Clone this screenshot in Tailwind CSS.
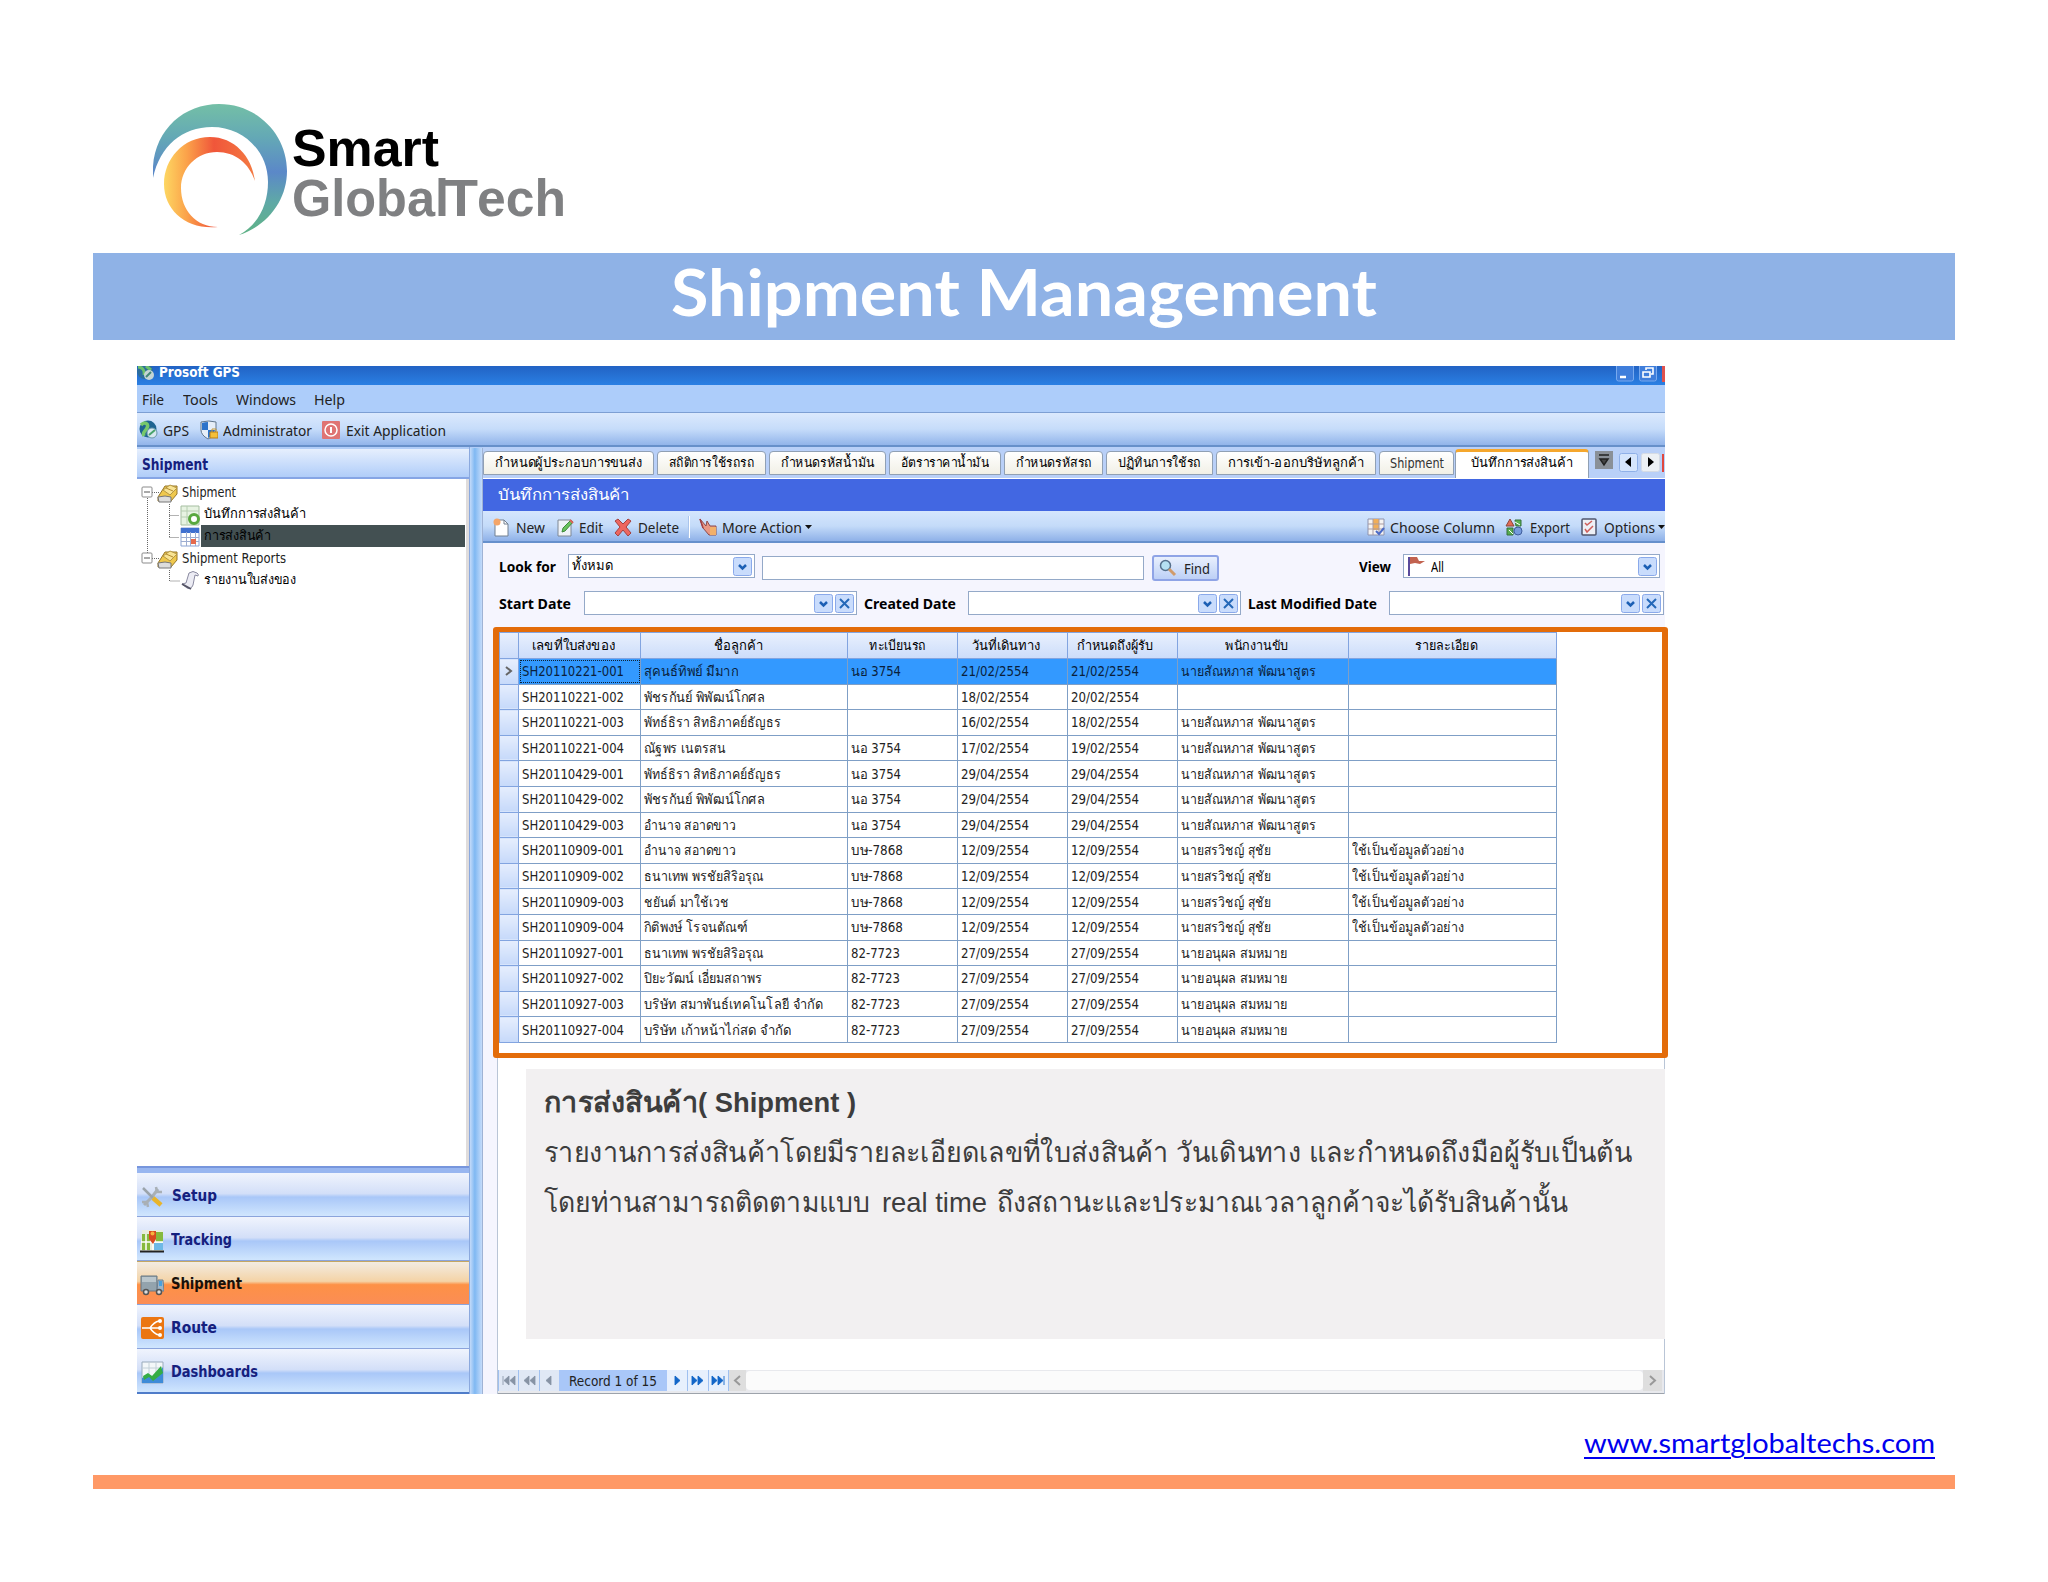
<!DOCTYPE html>
<html lang="th">
  <head>
    <meta charset="utf-8" />
    <title>Shipment Management</title>
    <script src="https://cdn.jsdelivr.net/npm/@tailwindcss/browser@4"></script>
  </head>
  <body class="w-[2048px] h-[1582px] overflow-hidden bg-white font-['DejaVu_Sans_Condensed','DejaVu_Sans',sans-serif] text-[#222]">
    <!-- Logo -->
    <header class="flex h-[253px] pl-[153px] pt-[104px]">
      <svg class="w-[135px] h-[132px] shrink-0" viewBox="0 0 135 132">
        <defs>
          <linearGradient id="ring" x1="0" y1="0" x2="0" y2="1">
            <stop offset="0" stop-color="#74bfa6" />
            <stop offset=".25" stop-color="#64a9b5" />
            <stop offset=".52" stop-color="#5b88c8" />
            <stop offset=".75" stop-color="#5fa9a6" />
            <stop offset="1" stop-color="#5fb386" />
          </linearGradient>
          <linearGradient id="flame" x1="0" y1="0" x2="1" y2="0">
            <stop offset="0" stop-color="#fdd762" />
            <stop offset=".25" stop-color="#fba24a" />
            <stop offset=".55" stop-color="#f0563a" />
            <stop offset="1" stop-color="#f47b43" />
          </linearGradient>
        </defs>
        <path d="M0 74C-3 30 28 0 66 0c39 0 68 31 68 67 0 28-18 54-48 64 20-11 29-31 29-53 0-31-25-55-56-55C29 23 7 42 0 74Z" fill="url(#ring)" />
        <path d="M102 77C99 52 81 33 57 33 30 33 11 55 11 80c0 26 22 46 54 43C43 123 28 106 28 84 28 64 44 48 64 48c18 0 32 11 38 29Z" fill="url(#flame)" />
      </svg>
      <div class="ml-[4px] pt-[19px] font-['Liberation_Sans'] text-[52px] leading-[50px] font-bold">
        <div class="text-black"><span data-w="147">Smart</span></div>
        <div class="flex text-[#7f8082]"><span data-w="157">Global</span><span class="-ml-[5px]" data-w="34">T</span><span class="-ml-px" data-w="89">ech</span></div>
      </div>
    </header>

    <div class="mx-[93px] w-[1862px] h-[87px] bg-[#8fb2e6] flex justify-center items-center text-white font-['Lato'] font-bold text-[65px] leading-none">
      <span class="-mt-[10px]" data-w="706">Shipment Management</span>
    </div>

    <!-- Application window -->
    <div class="mt-[26px] ml-[137px] w-[1528px] h-[1028px] flex flex-col bg-[#b1cdf8]">
      <div class="h-[19px] shrink-0 overflow-hidden flex bg-linear-to-b from-[#2263c4] to-[#2a7fe3] text-white">
        <svg class="w-[18px] h-[18px] shrink-0" viewBox="0 0 18 18"><circle cx="8" cy="5" r="8" fill="#2d6d9c" /><path d="M1 1c4 0 7 3 6 8M9 0l5 4" stroke="#6cc06c" stroke-width="3" fill="none" /><circle cx="12" cy="9" r="5" fill="#c5d5d5" /><path d="m9 11 5-5" stroke="#487" stroke-width="2" /></svg>
        <span class="ml-1 -mt-[5px] font-bold text-[14px] leading-[22px]" data-w="81">Prosoft GPS</span>
        <div class="ml-auto flex gap-[5px]">
          <svg class="w-[18px] h-[16px]" viewBox="0 0 18 16"><rect x=".5" y="-3" width="17" height="18" rx="2" fill="#3f7edb" stroke="#78a9ee" /><path d="M4 11h6" stroke="#fff" stroke-width="2.5" /></svg>
          <svg class="w-[18px] h-[16px]" viewBox="0 0 18 16"><rect x=".5" y="-3" width="17" height="18" rx="2" fill="#3f7edb" stroke="#78a9ee" /><path d="M7 4V2h7v6h-2M4 6h7v5H4z" stroke="#fff" stroke-width="1.6" fill="none" /></svg>
          <div class="w-[3px] h-[16px] bg-[#e0524e]"></div>
        </div>
      </div>

      <nav class="h-[28px] shrink-0 flex items-center pt-px pl-[5px] bg-[#adcdfa] font-['Noto_Sans'] text-[15px] border-b border-[#7d9fd3]">
        <span data-w="22">File</span><span class="ml-[19px]" data-w="35">Tools</span><span class="ml-[18px]" data-w="60">Windows</span><span class="ml-[18px]" data-w="31">Help</span>
      </nav>
      <div class="h-[34px] shrink-0 flex items-center pt-[2px] pl-[2px] bg-linear-to-b from-[#dbe9fd] via-[#c6dcfa] to-[#92b4ea] font-['Noto_Sans'] text-[15px] border-b-2 border-[#6790ca]">
        <svg class="w-[19px] h-[20px]" viewBox="0 0 19 20"><circle cx="9" cy="9" r="8.5" fill="#1f6491" /><path d="M2 5c4-4 8-1 6 3S3 12 5 16" stroke="#77c86b" stroke-width="3.5" fill="none" /><circle cx="13" cy="13" r="5" fill="#d7e8ef" stroke="#6998ab" /><path d="m10 15 6-5" stroke="#49a36b" stroke-width="2" /></svg>
        <span class="ml-[5px]" data-w="26">GPS</span>
        <svg class="ml-[11px] w-[18px] h-[20px]" viewBox="0 0 18 20"><path d="M1 2q8-2 15 0v8q-1 6-8 9-7-4-7-9z" fill="#e5eef8" stroke="#60768c" /><path d="M2 3q3-1 6-1v8H2zM8 10h7q-1 5-7 8z" fill="#2c73ca" /><path d="M10 12h8v6h-8z" fill="#f4bf3a" stroke="#b77f1b" /><path d="M12 12V9h4v3" stroke="#c59a3b" fill="none" /></svg>
        <span class="ml-[5px]" data-w="89">Administrator</span>
        <svg class="ml-[10px] w-[18px] h-[18px]" viewBox="0 0 18 18"><rect width="18" height="18" rx="1" fill="#df7474" /><circle cx="9" cy="9" r="6" fill="none" stroke="#fff" stroke-width="1.5" /><path d="M9 6v6" stroke="#fff" stroke-width="2" /></svg>
        <span class="ml-[6px]" data-w="100">Exit Application</span>
      </div>

      <div class="flex h-[947px]">
        <!-- Side panel -->
        <aside class="w-[333px] flex flex-col border-r border-[#8ba9de] pt-[2px]">
          <div class="h-[30px] shrink-0 flex items-center pt-[4px] pl-[5px] bg-linear-to-b from-[#e6effd] to-[#b0cdf9] border-b-2 border-[#86a5e5] text-[15px] font-bold text-[#15207e]"><span data-w="66">Shipment</span></div>
          <div class="flex-1 flex bg-white border-r-[3px] border-[#dfdcdc] pt-[1px]">
            <svg class="w-[66px] h-[130px] shrink-0" viewBox="0 0 66 130">
              <path d="M10.500 18v60M15 12.500h8M15 78.500h8M32.500 24v33M32.500 35.500h10M32.500 57.500h10M32.500 90v11h10" stroke="#666" stroke-dasharray="1 1" fill="none" />
              <g fill="#fff" stroke="#8b8b8b"><rect x="5" y="7" width="10" height="10" rx="1" /><rect x="5" y="73" width="10" height="10" rx="1" /></g>
              <path d="M7 12h6M7 78h6" stroke="#555" />
              <g id="folder"><path d="m21 17 7-11h12v8l-6 7H21z" fill="#efc84d" stroke="#97772a" /><path d="m26 10 7-5 7 3-7 7z" fill="#f8e393" stroke="#b59743" /><path d="m21 17 7-1 6 1v5H22z" fill="#ddd" stroke="#777" /><path d="m29 8 7 3" stroke="#b48b2f" /></g>
              <use href="#folder" y="66" />
              <path d="M44 26h18v19H44z" fill="#e7f3e2" stroke="#a5bea0" /><path d="M44 31h18M44 37h10M50 26v18" stroke="#b6ceb1" /><circle cx="57" cy="39" r="4.500" fill="#fff" stroke="#58a83e" stroke-width="3" />
              <path d="M44 48h18v18H44z" fill="#fff" stroke="#8aa3d2" /><path d="M44 48h18v5H44z" fill="#3f70d0" /><path d="M44 57.500h18M44 61.500h18M49.500 52v14M53.500 52v14M58.500 52v14" stroke="#9dadd0" /><path d="M54 59h5v5h-5z" fill="#e66a4c" />
              <path d="M52 93q4-3 8 0 2 1 1 3l-3-1-2 10q-2 5-6 3l-5-4 4-1z" fill="#ececf4" stroke="#8a8aa0" /><path d="m45 104 9 5" stroke="#556" stroke-width="2" />
            </svg>
            <div class="flex-1 pt-[1px] text-[14px]">
              <div class="h-[22px] flex items-center -ml-[21px]"><span data-w="54">Shipment</span></div>
              <div class="h-[22px] flex items-center pl-px text-[13px] text-black"><span data-w="102">บันทึกการส่งสินค้า</span></div>
              <div class="h-[22px] flex items-center -ml-[2px] w-[264px] pl-[3px] bg-[#435052] text-[13px] text-black"><span data-w="67">การส่งสินค้า</span></div>
              <div class="h-[22px] flex items-center -ml-[21px]"><span data-w="104">Shipment Reports</span></div>
              <div class="h-[22px] flex items-center pl-px text-[13px] text-black"><span data-w="92">รายงานใบส่งของ</span></div>
            </div>
          </div>
          <div class="h-[7px] shrink-0 bg-[#98b6f0] border-t-2 border-[#7796dd]"></div>
          <div class="h-[221px] shrink-0 flex flex-col text-[15px] font-bold text-[#15207e] border-b-2 border-[#4f7cc9]">
            <div class="h-[44px] flex items-center gap-[9px] pt-[4px] pl-[4px] border-b border-[#8ba4dc] bg-[linear-gradient(#f0f4fd,#d3dff8_48%,#a9c7f8_56%,#d0e6fe)]">
              <svg class="w-[22px] h-[22px]" viewBox="0 0 22 22"><path d="m3 19 8-8 6-8" stroke="#a9b0b6" stroke-width="3" fill="none" /><path d="m15 1 1 5 5 0M1 16l5 0 1 5" stroke="#a9b0b6" stroke-width="2.500" fill="none" /><path d="m2 2 10 10" stroke="#9ba4ab" stroke-width="2.500" /><path d="m12 12 8 7" stroke="#e8b42b" stroke-width="4.500" /></svg>
              <span data-w="45">Setup</span>
            </div>
            <div class="h-[44px] flex items-center gap-[7px] pt-[4px] pl-[3px] border-b border-[#8ba4dc] bg-[linear-gradient(#f0f4fd,#d3dff8_48%,#a9c7f8_56%,#d0e6fe)]">
              <svg class="w-[24px] h-[24px]" viewBox="0 0 24 24"><path d="M2 1h21v22H0z" fill="#e8eedb" /><path d="M2 5h8v16H2zM16 3h7v10h-7z" fill="#86ba3d" /><path d="M14 14h9v7h-9z" fill="#6eb9e6" /><path d="M6 5v17M1 13h22M13 12v10" stroke="#fff" stroke-width="1.500" /><path d="M9 2h7v8l-3 5-4-5z" fill="#d84b20" /><circle cx="12.500" cy="4.500" r="2" fill="#f6b43d" /><path d="M0 22.500h24" stroke="#222" stroke-width="2" /></svg>
              <span data-w="61">Tracking</span>
            </div>
            <div class="h-[44px] flex items-center gap-[7px] pt-[3px] pl-[3px] border-y border-t-[#c5a762] border-b-[#8ba4dc] bg-[linear-gradient(#f3ece2,#f4d3a6_46%,#fd9146_54%,#fb8d55)] text-[#191009]">
              <svg class="w-[24px] h-[22px]" viewBox="0 0 24 22"><path d="M1 2h16v15H1z" fill="#93a3ad" stroke="#697984" /><path d="M2 3h14v5H2z" fill="#bac6cc" /><path d="M18 6h5l1 11h-7z" fill="#9fb4c6" stroke="#6b8093" /><path d="M19 7h3v5h-3z" fill="#4aa1de" /><g fill="#ddd" stroke="#555" stroke-width="1.500"><circle cx="6" cy="18" r="2.500" /><circle cx="19" cy="18" r="2.500" /></g></svg>
              <span data-w="71">Shipment</span>
            </div>
            <div class="h-[44px] flex items-center gap-[7px] pt-[4px] pl-[4px] border-b border-[#8ba4dc] bg-[linear-gradient(#f0f4fd,#d3dff8_48%,#a9c7f8_56%,#d0e6fe)]">
              <svg class="w-[23px] h-[23px]" viewBox="0 0 23 23"><rect width="23" height="22" rx="2" fill="#eb7612" /><path d="M1 11h8q4-6 9-7M9 11h9M9 11q4 6 9 7" stroke="#fff" stroke-width="1.500" fill="none" /><g fill="#fff"><circle cx="19" cy="4" r="2" /><circle cx="19" cy="11" r="2" /><circle cx="19" cy="18" r="2" /></g></svg>
              <span data-w="46">Route</span>
            </div>
            <div class="h-[43px] flex items-center gap-[7px] pt-[4px] pl-[4px] bg-[linear-gradient(#f0f4fd,#d3dff8_48%,#a9c7f8_56%,#d0e6fe)]">
              <svg class="w-[23px] h-[23px]" viewBox="0 0 23 23"><path d="M1 1h21v21H1z" fill="#f3f7f9" stroke="#9ab" /><path d="M1 7h21M8 1v20M15 1v20" stroke="#c3d0d8" /><path d="M1 17q6-4 10-2t11-9v16H1z" fill="#3e8bd8" /><path d="m2 15 5-3 4 3 9-10 2 7-10 8-4-4-5 3z" fill="#35ad45" /></svg>
              <span data-w="87">Dashboards</span>
            </div>
          </div>
        </aside>

        <div class="w-[13px] mt-[1px] bg-linear-to-r from-[#c3daf9] via-[#7fb8f2] via-40% to-[#c4dbfa] border-r border-[#9fb3d5]"></div>

        <!-- Work area -->
        <main class="w-[1182px] flex flex-col bg-[#f5f5fe]">
          <div class="h-[31px] shrink-0 flex items-end gap-[3px] pb-[3px] bg-[#b9d0f8] text-[13px] text-black">
            <div class="w-[171px] h-[24px] shrink-0 flex items-center justify-center rounded-t-sm border border-[#90a0b4] bg-linear-to-b from-white to-[#f1f0e6]"><span data-w="147">กำหนดผู้ประกอบการขนส่ง</span></div>
            <div class="w-[109px] h-[24px] shrink-0 flex items-center justify-center rounded-t-sm border border-[#90a0b4] bg-linear-to-b from-white to-[#f1f0e6]"><span data-w="85">สถิติการใช้รถรถ</span></div>
            <div class="w-[117px] h-[24px] shrink-0 flex items-center justify-center rounded-t-sm border border-[#90a0b4] bg-linear-to-b from-white to-[#f1f0e6]"><span data-w="94">กำหนดรหัสน้ำมัน</span></div>
            <div class="w-[112px] h-[24px] shrink-0 flex items-center justify-center rounded-t-sm border border-[#90a0b4] bg-linear-to-b from-white to-[#f1f0e6]"><span data-w="88">อัตราราคาน้ำมัน</span></div>
            <div class="w-[99px] h-[24px] shrink-0 flex items-center justify-center rounded-t-sm border border-[#90a0b4] bg-linear-to-b from-white to-[#f1f0e6]"><span data-w="76">กำหนดรหัสรถ</span></div>
            <div class="w-[107px] h-[24px] shrink-0 flex items-center justify-center rounded-t-sm border border-[#90a0b4] bg-linear-to-b from-white to-[#f1f0e6]"><span data-w="83">ปฏิทินการใช้รถ</span></div>
            <div class="w-[160px] h-[24px] shrink-0 flex items-center justify-center rounded-t-sm border border-[#90a0b4] bg-linear-to-b from-white to-[#f1f0e6]"><span data-w="136">การเข้า-ออกบริษัทลูกค้า</span></div>
            <div class="w-[75px] h-[24px] shrink-0 flex items-center justify-center rounded-t-sm border border-[#90a0b4] bg-linear-to-b from-white to-[#f1f0e6] text-[14px] text-[#333]"><span data-w="54">Shipment</span></div>
            <div class="-ml-[2px] w-[134px] h-[29px] -mb-[3px] pb-[5px] shrink-0 flex items-center justify-center rounded-t-sm border-x border-t-[3px] border-x-[#90a0b4] border-t-[#f5a72d] bg-white"><span data-w="102">บันทึกการส่งสินค้า</span></div>
            <svg class="ml-[3px] mb-[5px] w-[18px] h-[20px] shrink-0" viewBox="0 0 18 20"><path d="M0 1h18v18H0z" fill="#8a9098" /><path d="M4 5h10M5 9h8l-4 6z" stroke="#222" fill="#444" stroke-width="1.500" /></svg>
            <svg class="ml-[3px] mb-[3px] w-[19px] h-[19px] shrink-0" viewBox="0 0 19 19"><rect x=".5" y=".5" width="18" height="18" rx="2" fill="#d5e5fc" stroke="#8fb0e8" /><path d="M12 4v10L6 9z" /></svg>
            <svg class="mb-[3px] w-[19px] h-[19px] shrink-0" viewBox="0 0 19 19"><rect x=".5" y=".5" width="18" height="18" rx="2" fill="#ecf0f4" stroke="#d5dbe4" /><path d="M7 4v10l6-5z" /></svg>
            <div class="-ml-px mb-[3px] w-[2px] h-[18px] bg-[#e0473f]"></div>
          </div>

          <div class="h-[33px] shrink-0 flex items-center pl-[15px] bg-[#4267e2] text-white text-[15px] border-t border-white"><span data-w="131">บันทึกการส่งสินค้า</span></div>

          <div class="h-[32px] shrink-0 flex items-center pt-[2px] pl-[10px] bg-linear-to-b from-[#d5e6fd] via-[#c4dbf9] to-[#8fb1e8] border-b-2 border-[#6690cc] font-['Noto_Sans'] text-[15px]">
            <svg class="w-[16px] h-[19px]" viewBox="0 0 16 19"><path d="M2 2h9l4 4v12H2z" fill="#fff" stroke="#738091" /><path d="M11 2v4h4" fill="none" stroke="#738091" /><circle cx="4" cy="4" r="3.500" fill="#f4a568" /></svg>
            <span class="ml-[7px]" data-w="29">New</span>
            <svg class="ml-[12px] w-[17px] h-[19px]" viewBox="0 0 17 19"><path d="M1 2h13v16H1z" fill="#eef2f7" stroke="#7e8895" /><path d="m5 14 1-4 8-8 2 2-8 9z" fill="#68c25d" stroke="#3f8a3b" /><path d="m13 2 3 3" stroke="#dd635b" stroke-width="2" /></svg>
            <span class="ml-[5px]" data-w="24">Edit</span>
            <svg class="ml-[11px] w-[18px] h-[18px]" viewBox="0 0 18 18"><path d="m1 3 3-2 5 5 5-5 3 2-5 6 5 6-3 3-5-6-5 6-3-3 5-6z" fill="#ed6660" stroke="#a5413f" /></svg>
            <span class="ml-[6px]" data-w="41">Delete</span>
            <div class="ml-[9px] w-[2px] h-[22px] bg-[#a9c4ec] border-r border-white"></div>
            <svg class="ml-[9px] w-[19px] h-[18px]" viewBox="0 0 19 18"><path d="m1 1 6 7 1-5 3 5h6v9h-7L4 10z" fill="#e99784" stroke="#8c4a4b" /><path d="M11 9h6v8h-6z" fill="#f2b06b" /><path d="m1 1 3 9" stroke="#a34145" stroke-width="1.500" /></svg>
            <span class="ml-[4px]" data-w="80">More Action</span>
            <svg class="ml-[3px] w-[7px] h-[5px]" viewBox="0 0 7 5"><path d="M0 0h7L3.500 4z" fill="#111" /></svg>
            <svg class="ml-auto w-[18px] h-[18px]" viewBox="0 0 18 18"><path d="M1 1h16v16H1z" fill="#f5f3f2" stroke="#8e93ad" /><path d="M6 1h6v11H6z" fill="#f1ae58" /><path d="M1 6h16M1 11h16M6 1v16M12 1v16" stroke="#a99ba2" /><path d="m9 13 3 3 5-6" stroke="#4a6ac7" stroke-width="2" fill="none" /></svg>
            <span class="ml-[5px]" data-w="105">Choose Column</span>
            <svg class="ml-[10px] w-[18px] h-[18px]" viewBox="0 0 18 18"><path d="m5 1 4 7H1z" fill="#e16c55" stroke="#8c4439" /><path d="M10 2h6v6h-5z" fill="#5cb152" stroke="#35713a" /><path d="M2 10h6v7H2z" fill="#58ac50" stroke="#35713a" /><circle cx="13" cy="13" r="4" fill="#759bdd" stroke="#3f5d9c" /><path d="m10 4 5 3M4 12l4 4" stroke="#fff" /></svg>
            <span class="ml-[7px]" data-w="40">Export</span>
            <svg class="ml-[11px] w-[16px] h-[18px]" viewBox="0 0 16 18"><rect x="1" y="1" width="14" height="16" rx="1" fill="#eef0f6" stroke="#50556e" stroke-width="1.500" /><path d="m4 5 2 2 5-4M4 11l2 3 6-6" stroke="#cf5f5b" stroke-width="1.500" fill="none" /></svg>
            <span class="ml-[7px]" data-w="51">Options</span>
            <svg class="ml-[3px] w-[7px] h-[5px]" viewBox="0 0 7 5"><path d="M0 0h7L3.500 4z" fill="#111" /></svg>
          </div>

          <svg class="hidden">
            <symbol id="down" viewBox="0 0 19 19"><rect x=".5" y=".5" width="18" height="18" rx="2" fill="#c9dcfc" stroke="#8aa9ea" /><path d="m6 8 3.500 3.500L13 8" stroke="#1c5fb4" stroke-width="2.500" fill="none" /></symbol>
            <symbol id="clear" viewBox="0 0 19 19"><rect x=".5" y=".5" width="18" height="18" rx="2" fill="#c9dcfc" stroke="#8aa9ea" /><path d="m5 5 9 9m0-9-9 9" stroke="#2468b8" stroke-width="2" fill="none" /></symbol>
          </svg>
          <!-- Filters -->
          <div class="h-[84px] shrink-0 pt-[10px] pl-[16px] text-black font-['Noto_Sans'] font-bold text-[15px]">
            <div class="flex h-[26px] items-center">
              <span data-w="57">Look for</span>
              <div class="ml-[12px] w-[187px] h-[24px] flex items-center justify-between pl-[3px] pr-[2px] bg-white border border-[#94a9c8] font-normal text-[13px]"><span data-w="41">ทั้งหมด</span><svg class="w-[19px] h-[19px]"><use href="#down" /></svg></div>
              <div class="ml-[7px] w-[382px] h-[24px] mt-[3px] bg-white border border-[#94a9c8]"></div>
              <div class="ml-[8px] w-[67px] h-[26px] mt-[4px] flex items-center pl-[5px] rounded-[3px] border-2 border-[#8fa4e6] bg-linear-to-b from-[#e9f0fd] to-[#bdd0f6] font-normal text-[14px] text-[#222]">
                <svg class="w-[18px] h-[18px]" viewBox="0 0 18 18"><circle cx="6.500" cy="6.500" r="5" fill="#b5e0f2" stroke="#55708c" stroke-width="1.500" /><path d="m10 10 6 6" stroke="#d09b6b" stroke-width="3" /></svg>
                <span class="ml-[7px]" data-w="26">Find</span>
              </div>
              <span class="ml-[140px]" data-w="32">View</span>
              <div class="ml-[12px] w-[257px] h-[24px] flex items-center pl-[3px] pr-[2px] bg-white border border-[#94a9c8] font-normal text-[14px]">
                <svg class="w-[18px] h-[20px]" viewBox="0 0 18 20"><path d="M2 1v19" stroke="#5a4a9c" stroke-width="2" /><path d="M3 1h7l2 4h6l-5 3-5-1-5 1z" fill="#c2624f" /></svg>
                <span class="ml-[6px]" data-w="13">All</span><svg class="ml-auto w-[19px] h-[19px]"><use href="#down" /></svg>
              </div>
            </div>
            <div class="flex h-[26px] mt-[11px] items-center">
              <span data-w="72">Start Date</span>
              <div class="ml-[13px] w-[273px] h-[24px] flex items-center justify-end gap-[2px] pr-[2px] bg-white border border-[#94a9c8]"><svg class="w-[19px] h-[19px]"><use href="#down" /></svg><svg class="w-[19px] h-[19px]"><use href="#clear" /></svg></div>
              <span class="ml-[7px]" data-w="92">Created Date</span>
              <div class="ml-[12px] w-[273px] h-[24px] flex items-center justify-end gap-[2px] pr-[2px] bg-white border border-[#94a9c8]"><svg class="w-[19px] h-[19px]"><use href="#down" /></svg><svg class="w-[19px] h-[19px]"><use href="#clear" /></svg></div>
              <span class="ml-[7px]" data-w="129">Last Modified Date</span>
              <div class="ml-[12px] w-[275px] h-[24px] flex items-center justify-end gap-[2px] pr-[2px] bg-white border border-[#94a9c8]"><svg class="w-[19px] h-[19px]"><use href="#down" /></svg><svg class="w-[19px] h-[19px]"><use href="#clear" /></svg></div>
            </div>
          </div>

          <!-- Shipment table -->
          <div class="ml-[10px] w-[1175px] h-[431px] shrink-0 border-x-[6px] border-y-[5px] border-[#e36c0a] rounded-[3px] bg-white text-[14px]">
            <table class="table-fixed border-collapse w-[1057px] h-[411px] leading-none">
              <colgroup><col class="w-[19px]" /><col class="w-[122px]" /><col class="w-[207px]" /><col class="w-[110px]" /><col class="w-[110px]" /><col class="w-[110px]" /><col class="w-[171px]" /><col class="w-[208px]" /></colgroup>
              <thead>
                <tr class="h-[26px] bg-linear-to-b from-[#e9f0fd] to-[#cbdcfa] text-[13px] text-black">
                  <th class="border border-[#82a4e0]"></th>
                  <th class="border border-[#82a4e0] font-normal p-0 pr-[12px]"><span data-w="83">เลขที่ใบส่งของ</span></th>
                  <th class="border border-[#82a4e0] font-normal p-0 pr-[12px]"><span data-w="49">ชื่อลูกค้า</span></th>
                  <th class="border border-[#82a4e0] font-normal p-0 pr-[10px]"><span data-w="57">ทะเบียนรถ</span></th>
                  <th class="border border-[#82a4e0] font-normal p-0 pr-[13px]"><span data-w="68">วันที่เดินทาง</span></th>
                  <th class="border border-[#82a4e0] font-normal p-0 pr-[15px]"><span data-w="76">กำหนดถึงผู้รับ</span></th>
                  <th class="border border-[#82a4e0] font-normal p-0 pr-[13px]"><span data-w="63">พนักงานขับ</span></th>
                  <th class="border border-[#82a4e0] font-normal p-0 pr-[13px]"><span data-w="63">รายละเอียด</span></th>
                </tr>
              </thead>
              <tbody id="shipments"></tbody>
            </table>
          </div>

          <!-- Description -->
          <div class="ml-[14px] flex-1 flex flex-col bg-white border-x border-[#b9c5d6]">
            <div class="mt-[11px] ml-[28px] w-[1139px] h-[270px] pt-[9px] pl-[18px] bg-[#f2f0f1] text-[#3d3d3d] font-['Liberation_Sans'] text-[28px] leading-[50px]">
              <div class="flex h-[50px] font-bold"><span data-w="154">การส่งสินค้า</span><span data-w="158">( Shipment )</span></div>
              <div class="h-[50px]"><span data-w="1088">รายงานการส่งสินค้าโดยมีรายละเอียดเลขที่ใบส่งสินค้า วันเดินทาง และกำหนดถึงมือผู้รับเป็นต้น</span></div>
              <div class="flex h-[50px]"><span data-w="326">โดยท่านสามารถติดตามแบบ</span><span class="ml-[12px]" data-w="105">real time</span><span class="ml-[10px]" data-w="571">ถึงสถานะและประมาณเวลาลูกค้าจะได้รับสินค้านั้น</span></div>
            </div>
            <!-- Record navigator -->
            <div class="mt-auto h-[24px] flex pb-[2px] bg-[#e8e9ed] border-b border-[#9da3ab] text-[14px]">
              <svg class="w-[61px] h-[21px] bg-[#e0e8f5]" viewBox="0 0 61 21"><path d="M.5 0v21M20.500 0v21M41.500 0v21" stroke="#9fc0f0" /><path d="M5 6v9M11 6v9l-5-4.500zM17 6v9l-5-4.500zM31 6v9l-5-4.500zM37 6v9l-5-4.500zM53 6v9l-5-4.500z" fill="#8793a5" stroke="#8793a5" stroke-width=".8" /></svg>
              <div class="w-[108px] h-[21px] flex items-center justify-center pt-px bg-[#a9c7f8]"><span data-w="88">Record 1 of 15</span></div>
              <svg class="w-[62px] h-[21px] bg-[#e7f0fd]" viewBox="0 0 62 21"><path d="M20.500 0v21M41.500 0v21M61.500 0v21" stroke="#9fc0f0" /><path d="M8 6v9l5-4.500zM25 6v9l5-4.500zM31 6v9l5-4.500zM45 6v9l5-4.500zM51 6v9l5-4.500zM57 6v9" fill="#1366c8" stroke="#1366c8" stroke-width=".9" /></svg>
              <svg class="w-[17px] h-[21px] bg-[#dedede]" viewBox="0 0 17 21"><path d="m11 6-5 4.500 5 4.500" stroke="#999" stroke-width="2" fill="none" /></svg>
              <div class="flex-1 h-[19px] mt-[1px] rounded-sm bg-[#fbfbfb]"></div>
              <svg class="mr-[2px] w-[19px] h-[21px] bg-[#dedede]" viewBox="0 0 19 21"><path d="m7 6 5 4.500L7 15" stroke="#999" stroke-width="2" fill="none" /></svg>
            </div>
          </div>
        </main>
      </div>
    </div>

    <footer class="ml-[93px] w-[1862px] pt-[30px] flex flex-col">
      <a class="self-end mr-[20px] h-[51px] font-['Lato'] text-[27px] leading-[38px] text-[#0000ee]" href="#"><span class="underline underline-offset-4" data-w="351">www.smartglobaltechs.com</span></a>
      <div class="h-[14px] bg-[#ff9966]"></div>
    </footer>

    <script>
      var customers = [
        ["สุคนธ์ทิพย์ มีมาก", 94],
        ["พัชรกันย์ พิพัฒน์โกศล", 121],
        ["พัทธ์ธิรา สิทธิภาคย์ธัญธร", 137],
        ["ณัฐพร เนตรสน", 82],
        ["อำนาจ สอาดขาว", 92],
        ["ธนาเทพ พรชัยสิริอรุณ", 120],
        ["ชยันต์ มาใช้เวช", 85],
        ["กิติพงษ์ โรจนตัณฑ์", 104],
        ["ปิยะวัฒน์ เอี่ยมสถาพร", 118],
        ["บริษัท สมาพันธ์เทคโนโลยี จำกัด", 179],
        ["บริษัท เก้าหน้าไก่สด จำกัด", 147],
      ];
      var plates = [["นอ 3754", 50], ["บษ-7868", 52], ["82-7723", 49]];
      var drivers = [["นายสัณหภาส พัฒนาสูตร", 135], ["นายสรวิชญ์ สุชัย", 90], ["นายอนุผล สมหมาย", 106]];
      var note = ["ใช้เป็นข้อมูลตัวอย่าง", 112];

      // id, customer, plate, travel date, delivery date, driver, note
      var rows = [
        ["SH20110221-001", 0, 0, "21/02/2554", "21/02/2554", 0],
        ["SH20110221-002", 1, -1, "18/02/2554", "20/02/2554", -1],
        ["SH20110221-003", 2, -1, "16/02/2554", "18/02/2554", 0],
        ["SH20110221-004", 3, 0, "17/02/2554", "19/02/2554", 0],
        ["SH20110429-001", 2, 0, "29/04/2554", "29/04/2554", 0],
        ["SH20110429-002", 1, 0, "29/04/2554", "29/04/2554", 0],
        ["SH20110429-003", 4, 0, "29/04/2554", "29/04/2554", 0],
        ["SH20110909-001", 4, 1, "12/09/2554", "12/09/2554", 1, note],
        ["SH20110909-002", 5, 1, "12/09/2554", "12/09/2554", 1, note],
        ["SH20110909-003", 6, 1, "12/09/2554", "12/09/2554", 1, note],
        ["SH20110909-004", 7, 1, "12/09/2554", "12/09/2554", 1, note],
        ["SH20110927-001", 5, 2, "27/09/2554", "27/09/2554", 2],
        ["SH20110927-002", 8, 2, "27/09/2554", "27/09/2554", 2],
        ["SH20110927-003", 9, 2, "27/09/2554", "27/09/2554", 2],
        ["SH20110927-004", 10, 2, "27/09/2554", "27/09/2554", 2],
      ];

      var tbody = document.getElementById("shipments");
      rows.forEach(function (row, i) {
        var tr = tbody.insertRow();
        tr.className = i === 0 ? "bg-[#3399ff] text-[#0a1f3c]" : "bg-white text-[#222]";
        var head = tr.insertCell();
        head.className = "border border-[#82a4e0] bg-linear-to-b from-[#e6eefd] to-[#c6d9fa] p-0 text-center";
        if (i === 0) {
          head.innerHTML = '<svg class="w-[8px] h-[10px] mx-auto" viewBox="0 0 8 10"><path d="m1 1 5 4-5 4" stroke="#666" stroke-width="2" fill="none" /></svg>';
        }
        [
          [row[0], 102],
          customers[row[1]],
          plates[row[2]],
          [row[3], 68],
          [row[4], 68],
          drivers[row[5]],
          row[6],
        ].forEach(function (cell, c) {
          var td = tr.insertCell();
          td.className = "border border-[#7f9fc6] p-0 pl-[3px] whitespace-nowrap";
          if (i === 0 && c === 0) td.classList.add("outline-1", "outline-dotted", "outline-[#123]", "-outline-offset-2");
          if (!cell) return;
          var span = document.createElement("span");
          span.textContent = cell[0];
          span.dataset.w = cell[1];
          td.appendChild(span);
        });
      });

      // Scale every label horizontally to its set width
      var fitter = new ResizeObserver(function (entries) {
        entries.forEach(function (entry) {
          var el = entry.target;
          var natural = entry.borderBoxSize[0].inlineSize;
          if (!natural) return;
          var w = Number(el.dataset.w);
          el.style.transform = "scaleX(" + w / natural + ")";
          el.style.marginRight = w - natural + "px";
        });
      });
      document.querySelectorAll("[data-w]").forEach(function (el) {
        el.classList.add("inline-block", "whitespace-nowrap", "origin-left", "shrink-0");
        fitter.observe(el);
      });
    </script>
  </body>
</html>
